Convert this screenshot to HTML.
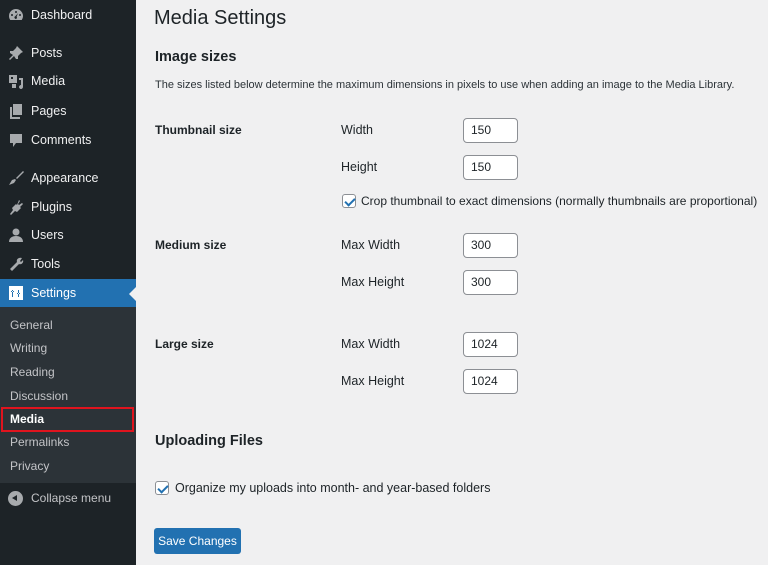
<!DOCTYPE html>
<html><head><meta charset="utf-8"><style>
*{margin:0;padding:0;box-sizing:border-box}
body{width:768px;height:565px;overflow:hidden;background:#f0f0f1;font-family:"Liberation Sans",sans-serif;color:#1d2327;position:relative}
#sb{position:absolute;left:0;top:0;width:136px;height:565px;background:#1d2327}
.mi{position:absolute;left:0;width:136px;height:28px;color:#f0f0f1;font-size:12.5px;line-height:28px;padding-left:31px}
.mi svg{position:absolute;left:8px;top:6px;width:16px;height:16px;fill:#a7aaad}
#sub{position:absolute;left:0;top:307px;width:136px;height:176px;background:#2c3338}
.si{position:absolute;left:10px;font-size:12px;color:#c3c4c7;line-height:16px}
.t{position:absolute;white-space:nowrap}
.lbl{font-size:12.5px;color:#1d2327}
.th{font-size:12px;font-weight:bold}
.in{position:absolute;left:463px;width:55px;height:25px;background:#fff;border:1px solid #8c8f94;border-radius:4px;font-size:12px;line-height:23px;padding-left:7px}
.cb{position:absolute;width:14px;height:14px;background:#fff;border:1px solid #8c8f94;border-radius:3px}
.cb:after{content:"";position:absolute;left:3.5px;top:0.5px;width:4px;height:8px;border:solid #2271b1;border-width:0 2px 2px 0;transform:rotate(45deg)}
</style></head><body>
<div id="sb">
<div class="mi" style="top:1px"><svg viewBox="0 0 16 16"><path d="M8 2a7 7 0 0 0-7 7c0 1.5.5 3 1.3 4h11.4A7 7 0 0 0 8 2zm0 2a1 1 0 1 1 0 2 1 1 0 0 1 0-2zm4 3a1 1 0 1 1 0 2 1 1 0 0 1 0-2zM4 7a1 1 0 1 1 0 2 1 1 0 0 1 0-2zm4 5a1.5 1.5 0 0 1-.6-2.9l2.6-3-1.4 3.6A1.5 1.5 0 0 1 8 12z"/></svg>Dashboard</div>
<div class="mi" style="top:39px"><svg viewBox="0 0 16 16"><path d="M9 1l6 6-2 1-3 3 0 3-2 0-2-3-4 4-1-1 4-4-3-2V6h3l3-3z"/></svg>Posts</div>
<div class="mi" style="top:67px"><svg viewBox="0 0 16 16"><path d="M1 2h8v8H1zM3 4v2h2V4zM11 5h4v9c0 1-1 2-2 2s-2-1-2-2 1-2 2-2V7h-2zM4 11h4v4H4z"/></svg>Media</div>
<div class="mi" style="top:97px"><svg viewBox="0 0 16 16"><path d="M5 1h9v11H5zM2 4h2v10h8v2H2z"/></svg>Pages</div>
<div class="mi" style="top:126px"><svg viewBox="0 0 16 16"><path d="M2 2h12v9H8l-3 4v-4H2z"/></svg>Comments</div>
<div class="mi" style="top:164px"><svg viewBox="0 0 16 16"><path d="M15 1l-7 7 1 1 7-7zM7 9l-3 1-3 5 5-2 2-3z"/></svg>Appearance</div>
<div class="mi" style="top:193px"><svg viewBox="0 0 16 16"><path d="M11 1l1 1-2 3 1 1 3-2 1 1-3 3 1 1-4 4-2-1-4 4-1-1 3-4-1-2 4-4 1 1z"/></svg>Plugins</div>
<div class="mi" style="top:221px"><svg viewBox="0 0 16 16"><circle cx="8" cy="5" r="3.5"/><path d="M1 15c0-4 3-6 7-6s7 2 7 6z"/></svg>Users</div>
<div class="mi" style="top:250px"><svg viewBox="0 0 16 16"><path d="M14 2l-2 3 1 1 2-2c1 3-2 5-4 4l-7 7-2-2 7-7c-1-3 2-5 5-4z"/></svg>Tools</div>
<div class="mi" style="top:279px;background:#2271b1;color:#fff"><svg viewBox="0 0 16 16" style="fill:#fff"><path d="M1 1h14v14H1zM4 5v7h1V5zm-1 2h3V6H3zm7-2v7h1V5zm-1 4h3V8H9z" fill-rule="evenodd"/></svg>Settings</div>
<div style="position:absolute;left:129px;top:287px;width:0;height:0;border-top:7px solid transparent;border-bottom:7px solid transparent;border-right:7px solid #f0f0f1"></div>
<div id="sub"></div>
<div class="si" style="top:317px">General</div>
<div class="si" style="top:340px">Writing</div>
<div class="si" style="top:364px">Reading</div>
<div class="si" style="top:388px">Discussion</div>
<div style="position:absolute;left:1px;top:407px;width:133px;height:25px;border:2px solid #e0141e"></div>
<div class="si" style="top:411px;color:#fff;font-weight:bold">Media</div>
<div class="si" style="top:434px">Permalinks</div>
<div class="si" style="top:458px">Privacy</div>
<div style="position:absolute;left:8px;top:491px;width:15px;height:15px;border-radius:50%;background:#a7aaad"></div>
<div style="position:absolute;left:12px;top:495px;width:0;height:0;border-top:3.5px solid transparent;border-bottom:3.5px solid transparent;border-right:5px solid #1d2327"></div>
<div class="t" style="left:31px;top:491px;font-size:12px;color:#c3c4c7">Collapse menu</div>
</div>

<div class="t" style="left:154px;top:7px;font-size:20px;color:#1d2327">Media Settings</div>
<div class="t" style="left:155px;top:49px;font-size:14.5px;font-weight:bold;color:#1d2327">Image sizes</div>
<div class="t" style="left:155px;top:79px;font-size:11px;color:#2c3338">The sizes listed below determine the maximum dimensions in pixels to use when adding an image to the Media Library.</div>

<div class="t th" style="left:155px;top:123px">Thumbnail size</div>
<div class="t lbl" style="left:341px;top:123px">Width</div>
<div class="in" style="top:118px">150</div>
<div class="t lbl" style="left:341px;top:160px">Height</div>
<div class="in" style="top:155px">150</div>
<div class="cb" style="left:342px;top:194px"></div>
<div class="t" style="left:361px;top:194px;font-size:12px">Crop thumbnail to exact dimensions (normally thumbnails are proportional)</div>

<div class="t th" style="left:155px;top:238px">Medium size</div>
<div class="t lbl" style="left:341px;top:238px">Max Width</div>
<div class="in" style="top:233px">300</div>
<div class="t lbl" style="left:341px;top:275px">Max Height</div>
<div class="in" style="top:270px">300</div>

<div class="t th" style="left:155px;top:337px">Large size</div>
<div class="t lbl" style="left:341px;top:337px">Max Width</div>
<div class="in" style="top:332px">1024</div>
<div class="t lbl" style="left:341px;top:374px">Max Height</div>
<div class="in" style="top:369px">1024</div>

<div class="t" style="left:155px;top:433px;font-size:14.5px;font-weight:bold">Uploading Files</div>
<div class="cb" style="left:155px;top:481px"></div>
<div class="t lbl" style="left:175px;top:481px">Organize my uploads into month- and year-based folders</div>

<div style="position:absolute;left:154px;top:528px;width:87px;height:26px;background:#2271b1;border-radius:3px;color:#fff;font-size:12px;line-height:26px;text-align:center">Save Changes</div>
</body></html>
